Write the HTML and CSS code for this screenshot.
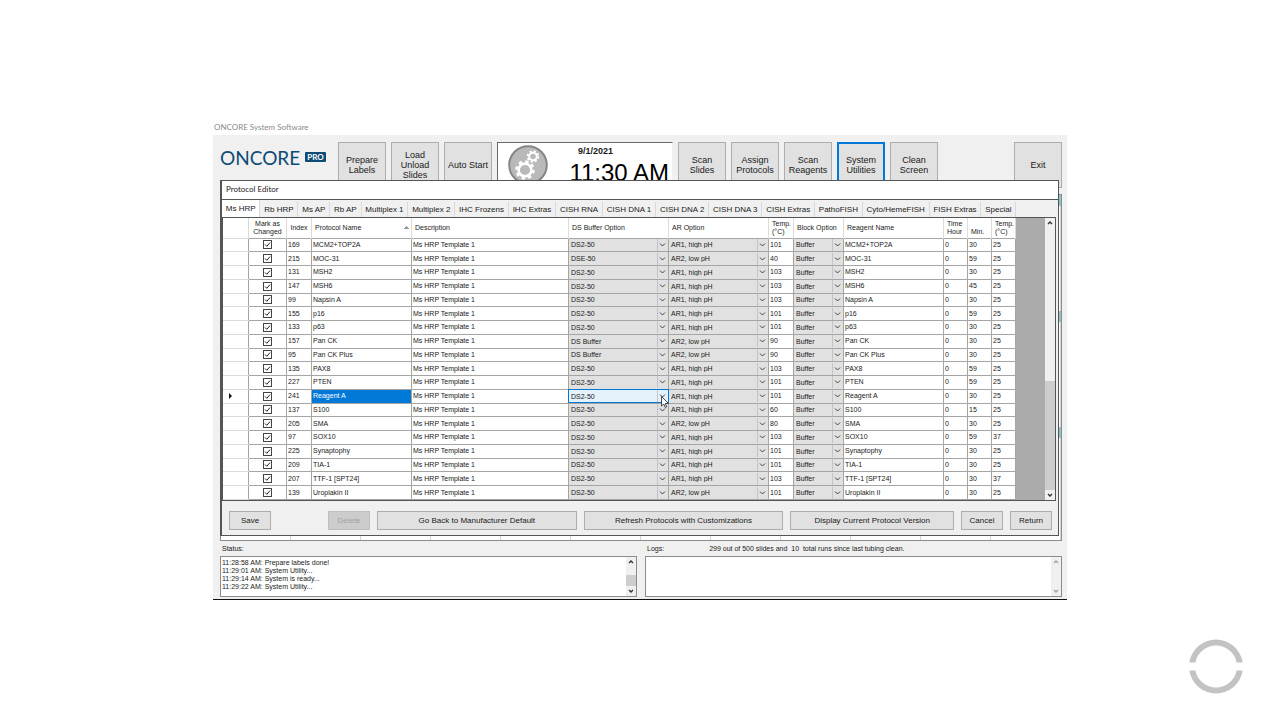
FILE: index.html
```
<!DOCTYPE html>
<html lang="en">
<head>
    <meta charset="UTF-8">
    <meta name="viewport" content="width=device-width, initial-scale=1.0">
    <title>ONCORE System Software</title>
    <link rel="stylesheet" href="styles.css">
</head>
<body>
    <main class="app">
        <div class="app-title">ONCORE System Software</div>
        <div class="app-body">
            <header class="toolbar">
                <div class="logo">ONCORE<span class="logo-badge">PRO</span></div>
                <button class="btn tool-btn">Prepare Labels</button>
                <button class="btn tool-btn">Load Unload Slides</button>
                <button class="btn tool-btn">Auto Start</button>
                <div class="clock">
                    <svg class="gears" viewBox="0 0 40 40" aria-hidden="true">
                        <circle cx="20" cy="20" r="18.8" fill="#b9b9b9" stroke="#858585" stroke-width="2"/>
                        <g fill="none" stroke="#fff">
                            <circle cx="17" cy="25" r="6.4" stroke-width="2.6"/>
                            <circle cx="17" cy="25" r="8.6" stroke-width="2.4" stroke-dasharray="3.4 3.35"/>
                            <circle cx="25" cy="11.5" r="3.8" stroke-width="2"/>
                            <circle cx="25" cy="11.5" r="5.4" stroke-width="1.8" stroke-dasharray="2.2 2.04"/>
                        </g>
                    </svg>
                    <div class="clock-text">
                        <div class="date">9/1/2021</div>
                        <div class="time">11:30 AM</div>
                    </div>
                </div>
                <button class="btn tool-btn">Scan Slides</button>
                <button class="btn tool-btn">Assign Protocols</button>
                <button class="btn tool-btn">Scan Reagents</button>
                <button class="btn tool-btn focused">System Utilities</button>
                <button class="btn tool-btn">Clean Screen</button>
                <button class="btn tool-btn exit-btn">Exit</button>
            </header>

            <div class="workspace">
                <div class="slides-frame">
                    <span class="marker"></span>
                    <span class="marker"></span>
                    <span class="marker"></span>
                </div>
                <section class="dialog" aria-label="Protocol Editor">
                    <div class="dialog-title">Protocol Editor</div>
                    <div class="tabs" role="tablist">
                        <button class="tab active" role="tab" aria-selected="true">Ms HRP</button>
                        <button class="tab" role="tab">Rb HRP</button>
                        <button class="tab" role="tab">Ms AP</button>
                        <button class="tab" role="tab">Rb AP</button>
                        <button class="tab" role="tab">Multiplex 1</button>
                        <button class="tab" role="tab">Multiplex 2</button>
                        <button class="tab" role="tab">IHC Frozens</button>
                        <button class="tab" role="tab">IHC Extras</button>
                        <button class="tab" role="tab">CISH RNA</button>
                        <button class="tab" role="tab">CISH DNA 1</button>
                        <button class="tab" role="tab">CISH DNA 2</button>
                        <button class="tab" role="tab">CISH DNA 3</button>
                        <button class="tab" role="tab">CISH Extras</button>
                        <button class="tab" role="tab">PathoFISH</button>
                        <button class="tab" role="tab">Cyto/HemeFISH</button>
                        <button class="tab" role="tab">FISH Extras</button>
                        <button class="tab" role="tab">Special</button>
                    </div>

                    <div class="grid">
                        <table class="protocols">
                            <colgroup>
                                <col class="c-marker">
                                <col class="c-check">
                                <col class="c-num">
                                <col class="c-name">
                                <col class="c-desc">
                                <col class="c-option">
                                <col class="c-option">
                                <col class="c-num">
                                <col class="c-block">
                                <col class="c-reagent">
                                <col class="c-time">
                                <col class="c-time">
                                <col class="c-time">
                            </colgroup>
                            <thead>
                                <tr>
                                    <th></th>
                                    <th class="center">Mark as Changed</th>
                                    <th class="center">Index</th>
                                    <th class="sorted">Protocol Name</th>
                                    <th>Description</th>
                                    <th>DS Buffer Option</th>
                                    <th>AR Option</th>
                                    <th>Temp. (&deg;C)</th>
                                    <th>Block Option</th>
                                    <th>Reagent Name</th>
                                    <th>Time Hour</th>
                                    <th class="low">Min.</th>
                                    <th>Temp. (&deg;C)</th>
                                </tr>
                            </thead>
                            <tbody id="rows"></tbody>
                        </table>
                        <div class="scrollbar">
                            <span class="arrow up"></span>
                            <span class="thumb"></span>
                            <span class="arrow down"></span>
                        </div>
                    </div>

                    <div class="actions">
                        <button class="btn save-btn">Save</button>
                        <button class="btn" disabled>Delete</button>
                        <button class="btn wide">Go Back to Manufacturer Default</button>
                        <button class="btn wide">Refresh Protocols with Customizations</button>
                        <button class="btn medium">Display Current Protocol Version</button>
                        <button class="btn">Cancel</button>
                        <button class="btn">Return</button>
                    </div>
                </section>
            </div>

            <footer class="footer">
                <div class="panel">
                    <div class="panel-label">Status:</div>
                    <div class="panel-box">
                        <div class="messages">
                            <div>11:28:58 AM: Prepare labels done!</div>
                            <div>11:29:01 AM: System Utility...</div>
                            <div>11:29:14 AM: System is ready...</div>
                            <div>11:29:22 AM: System Utility...</div>
                        </div>
                        <div class="scrollbar">
                            <span class="arrow up"></span>
                            <span class="thumb"></span>
                            <span class="arrow down"></span>
                        </div>
                    </div>
                </div>
                <div class="panel">
                    <div class="panel-label">Logs:<span class="runs">299 out of 500 slides and &nbsp;10 &nbsp;total runs since last tubing clean.</span></div>
                    <div class="panel-box">
                        <div class="messages"></div>
                        <div class="scrollbar inactive">
                            <span class="arrow up"></span>
                            <span class="arrow down"></span>
                        </div>
                    </div>
                </div>
            </footer>
        </div>
    </main>

    <svg class="ring" viewBox="0 0 54 55" aria-hidden="true">
        <path d="M.3 23.5A27 27 0 0 1 53.7 23.5H47.6A21 21 0 0 0 6.4 23.5Z" fill="#c3c3c3"/>
        <path d="M.3 31.5A27 27 0 0 0 53.7 31.5H47.6A21 21 0 0 1 6.4 31.5Z" fill="#c3c3c3"/>
    </svg>

    <script src="script.js"></script>
</body>
</html>
```
FILE: styles.css
```
/* Global */
* {
    box-sizing: border-box;
}

body {
    margin: 0;
    background-color: #fff;
    color: #1a1a1a;
    font-family: "Liberation Sans", Arial, sans-serif;
    font-size: 8px;
}

button, select, input {
    font-family: inherit;
    font-size: inherit;
    color: inherit;
    margin: 0;
}

.app {
    max-width: 854px;
    margin: 120px auto 0;
}

.app-title {
    height: 15px;
    padding-left: 1px;
    line-height: 14px;
    color: #8a8a8a;
    font-family: Lato, sans-serif;
}

.app-body {
    padding: 7px 5px 2px 7px;
    background-color: #f0f0f0;
    border-bottom: 1px solid #111;
}

.btn {
    height: 19px;
    min-width: 42px;
    padding: 0 4px;
    background-color: #e1e1e1;
    border: 1px solid #adadad;
}

.btn:disabled {
    background-color: #ccc;
    border-color: #bfbfbf;
    color: #a3a3a3;
}

/* Toolbar */
.toolbar {
    display: flex;
    gap: 5px;
    height: 46px;
}

.logo {
    display: flex;
    flex: none;
    align-items: center;
    gap: 5px;
    width: 113px;
    height: 30px;
    color: #0f4c75;
    font-family: Lato, sans-serif;
    font-size: 19px;
}

.logo-badge {
    padding: 0 2px;
    border-radius: 1px;
    background-color: #0f4c75;
    color: #fff;
    font-size: 8px;
    font-weight: bold;
    line-height: 10px;
}

.tool-btn {
    width: 48px;
    height: 46px;
    padding: 0 2px;
    font-size: 9px;
    line-height: 10px;
}

.tool-btn.focused {
    border: 2px solid #0078d7;
}

.exit-btn {
    margin-left: auto;
}

.clock {
    display: flex;
    flex: none;
    width: 176px;
    padding: 2px 3px 0 10px;
    background-color: #fff;
    border: 1px solid #696969;
    border-right-color: #f0f0f0;
}

.gears {
    flex: none;
    width: 40px;
    height: 40px;
}

.clock-text {
    flex: 1;
    text-align: right;
}

.date {
    padding-right: 56px;
    font-size: 9px;
    font-weight: bold;
    line-height: 12px;
}

.time {
    color: #000;
    font-size: 24px;
    line-height: 32px;
}

/* Protocol editor, drawn over the slides frame */
.workspace {
    position: relative;
    margin-top: -8px;
    padding: 0 3px 5px 0;
}

.slides-frame {
    position: absolute;
    inset: 14px 0 0 0;
    display: flex;
    flex-direction: column;
    align-items: flex-end;
    gap: 105px;
    border: 1px solid #8c8c8c;
    background: repeating-linear-gradient(to right, #fff 0 69px, #d5d5d5 69px 70px);
}

.marker {
    width: 3px;
    height: 11px;
    background-color: #8fc4c6;
}

.dialog {
    position: relative;
    background-color: #f0f0f0;
    border: 1px solid #555;
    border-left-width: 2px;
}

.dialog-title {
    height: 19px;
    padding-left: 4px;
    border-bottom: 1px solid #555;
    background-color: #fff;
    font-family: Lato, sans-serif;
    line-height: 16px;
}

.tabs {
    display: flex;
    align-items: flex-end;
    width: 95%;
    height: 17px;
}

.tab {
    flex: 1 1 auto;
    height: 15px;
    padding: 0 0 1px;
    border: 0;
    border-right: 1px solid #d9d9d9;
    background-color: transparent;
    white-space: nowrap;
}

.tab.active {
    height: 17px;
    background-color: #fff;
}

.grid {
    display: flex;
    justify-content: space-between;
    margin-right: 2px;
    border: 1px solid #555;
    background-color: #ababab;
}

.protocols {
    flex: none;
    width: 793px;
    height: 282px;
    border-collapse: collapse;
    table-layout: fixed;
    background-color: #fff;
    font-size: 7px;
}

.c-marker { width: 25px; }
.c-check { width: 38px; }
.c-num { width: 25px; }
.c-name { width: 100px; }
.c-option { width: 100px; }
.c-block { width: 50px; }
.c-reagent { width: 100px; }
.c-time { width: 24px; }

.protocols th {
    height: 20px;
    padding: 0 3px;
    border-right: 1px solid #dcdcdc;
    font-weight: normal;
    line-height: 8px;
    text-align: left;
}

.protocols th.center {
    padding: 0;
    text-align: center;
}

.protocols th.low {
    padding-top: 8px;
}

.protocols th.sorted {
    background: conic-gradient(from 135deg at 50% 0, #999 90deg, transparent 0) calc(100% - 2px) 50% / 5px 3px no-repeat;
}

.protocols td {
    height: 13px;
    padding: 0 1px;
    border: 1px solid #a5a5a5;
    line-height: 10px;
    white-space: nowrap;
}

.protocols td:first-child {
    border-color: #dcdcdc #a5a5a5 #dcdcdc transparent;
    text-align: center;
}

.protocols td.option {
    padding: 0;
    background-color: #e1e1e1;
}

.protocols td.selected {
    background-color: #0078d7;
    color: #fff;
}

.protocols select {
    display: block;
    width: 100%;
    height: 12px;
    padding: 0 12px 0 2px;
    border: 0;
    border-radius: 0;
    appearance: none;
    background: url("data:image/svg+xml,%3Csvg xmlns='http://www.w3.org/2000/svg' width='11' height='12'%3E%3Cpath d='M.5 0V12' stroke='%23c4c4c4'/%3E%3Cpath d='M3 4.5L5.5 7L8 4.5' fill='none' stroke='%23444'/%3E%3C/svg%3E") right center no-repeat;
}

.protocols td.current {
    position: relative;
}

.protocols td.current select {
    background-color: #e5f1fb;
    outline: 1px solid #0078d7;
}

.protocols input {
    display: block;
    width: 9px;
    height: 9px;
    margin: 0 auto;
    border: 1px solid #444;
    appearance: none;
    background: #fff url("data:image/svg+xml,%3Csvg xmlns='http://www.w3.org/2000/svg' width='7' height='7'%3E%3Cpath d='M1 3.5L2.8 5.3L6 1.6' fill='none' stroke='%23222'/%3E%3C/svg%3E") center no-repeat;
}

.row-arrow {
    display: block;
    width: 0;
    margin-left: 4px;
    border: 3px solid transparent;
    border-left-color: #111;
    border-right-width: 0;
}

.cursor {
    position: absolute;
    top: 6px;
    right: -1px;
    z-index: 1;
    width: 8px;
    height: 12px;
}

/* Scrollbars */
.scrollbar {
    display: flex;
    flex-direction: column;
    width: 10px;
    background-color: #f0f0f0;
}

.arrow {
    width: 10px;
    height: 10px;
    background: url("data:image/svg+xml,%3Csvg xmlns='http://www.w3.org/2000/svg' width='10' height='10'%3E%3Cpath d='M3 6L5 4L7 6' fill='none' stroke='%23333' stroke-width='1.4'/%3E%3C/svg%3E") center no-repeat;
}

.arrow.down {
    margin-top: auto;
    transform: rotate(180deg);
}

.thumb {
    height: 11px;
    margin-top: 8px;
    background-color: #cdcdcd;
}

.grid .thumb {
    height: 109px;
    margin-top: auto;
}

.grid .arrow.down {
    margin-top: 0;
}

.inactive .arrow {
    opacity: 0.4;
}

.actions {
    display: flex;
    gap: 7px;
    padding: 10px 6px 5px 7px;
}

.save-btn {
    margin-right: 50px;
}

.wide {
    flex: 200;
}

.medium {
    flex: 162;
}

/* Status and logs */
.footer {
    display: grid;
    grid-template-columns: 1fr 1fr;
    gap: 8px;
    font-size: 7px;
}

.panel-label {
    padding: 4px 2px 3px;
    line-height: 8px;
}

.runs {
    margin-left: 45px;
}

.panel-box {
    display: flex;
    min-height: 41px;
    border: 1px solid #8c8c8c;
    background-color: #fff;
}

.messages {
    flex: 1;
    padding: 2px 1px;
    line-height: 8px;
}

/* Watermark in the page corner */
.ring {
    position: fixed;
    right: 37px;
    bottom: 26px;
    width: 54px;
    height: 55px;
}
```
FILE: script.js
```
const template = 'Ms HRP Template 1';
const high = 'AR1, high pH';
const low = 'AR2, low pH';

// index, name, DS buffer, AR option, temp, minutes, reagent temp
const protocols = [
    [169, 'MCM2+TOP2A', 'DS2-50', high, 101, 30, 25],
    [215, 'MOC-31', 'DSE-50', low, 40, 59, 25],
    [131, 'MSH2', 'DS2-50', high, 103, 30, 25],
    [147, 'MSH6', 'DS2-50', high, 103, 45, 25],
    [99, 'Napsin A', 'DS2-50', high, 103, 30, 25],
    [155, 'p16', 'DS2-50', high, 101, 59, 25],
    [133, 'p63', 'DS2-50', high, 101, 30, 25],
    [157, 'Pan CK', 'DS Buffer', low, 90, 30, 25],
    [95, 'Pan CK Plus', 'DS Buffer', low, 90, 30, 25],
    [135, 'PAX8', 'DS2-50', high, 103, 59, 25],
    [227, 'PTEN', 'DS2-50', high, 101, 59, 25],
    [241, 'Reagent A', 'DS2-50', high, 101, 30, 25],
    [137, 'S100', 'DS2-50', high, 60, 15, 25],
    [205, 'SMA', 'DS2-50', low, 80, 30, 25],
    [97, 'SOX10', 'DS2-50', high, 103, 59, 37],
    [225, 'Synaptophy', 'DS2-50', high, 101, 30, 25],
    [209, 'TIA-1', 'DS2-50', high, 101, 30, 25],
    [207, 'TTF-1 [SPT24]', 'DS2-50', high, 103, 30, 37],
    [139, 'Uroplakin II', 'DS2-50', low, 101, 30, 25]
];

const cursor = '<svg class="cursor" viewBox="0 0 8 12" aria-hidden="true"><path d="M.5 .5V10L2.8 8L4.2 11.4L5.7 10.8L4.3 7.5H7.5Z" fill="#fff" stroke="#222" stroke-width=".8"/></svg>';

function select(label, value) {
    return `<select aria-label="${label}"><option>${value}</option></select>`;
}

function renderRows() {
    document.getElementById('rows').innerHTML = protocols.map((p) => {
        const [index, name, buffer, ar, temp, min, reagentTemp] = p;
        const current = index === 241;
        return `<tr>
            <td>${current ? '<span class="row-arrow"></span>' : ''}</td>
            <td><input type="checkbox" aria-label="Mark ${name} as changed" checked></td>
            <td>${index}</td>
            <td class="${current ? 'selected' : ''}">${name}</td>
            <td>${template}</td>
            <td class="option ${current ? 'current' : ''}">${select('DS Buffer Option', buffer)}${current ? cursor : ''}</td>
            <td class="option">${select('AR Option', ar)}</td>
            <td>${temp}</td>
            <td class="option">${select('Block Option', 'Buffer')}</td>
            <td>${name}</td>
            <td>0</td>
            <td>${min}</td>
            <td>${reagentTemp}</td>
        </tr>`;
    }).join('');
}

renderRows();
```
